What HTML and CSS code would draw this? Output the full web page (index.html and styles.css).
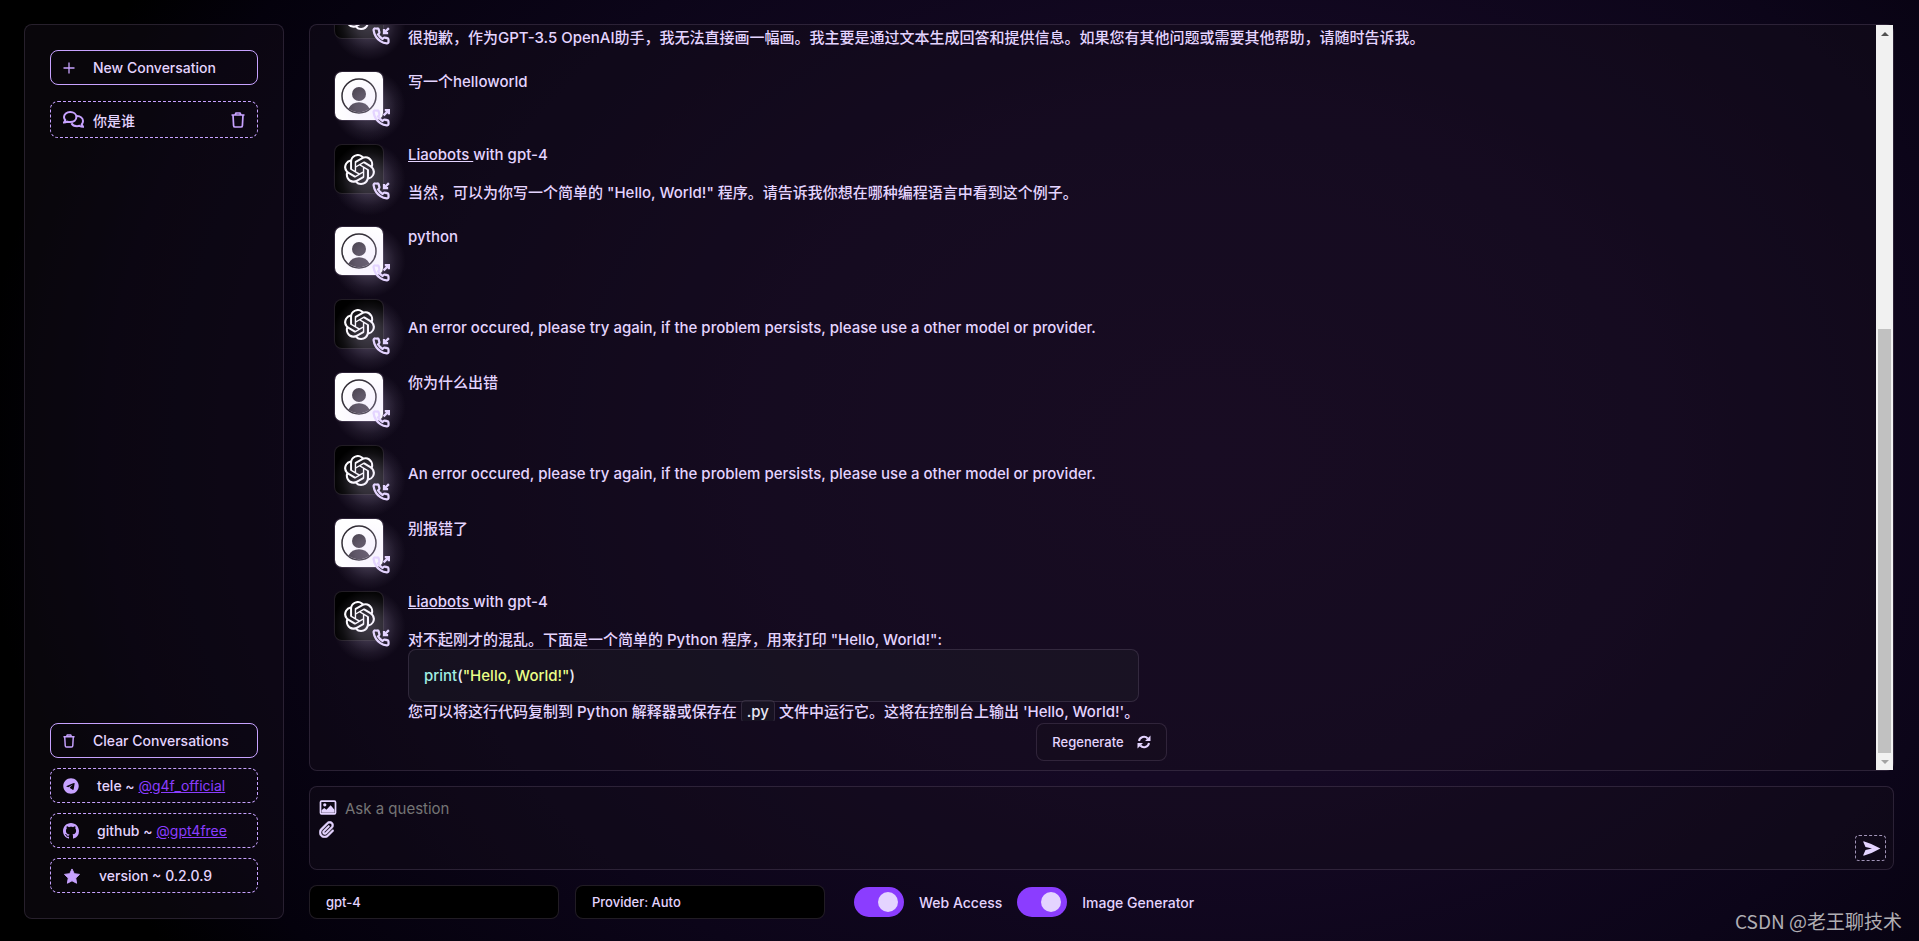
FILE: index.html
```html
<!DOCTYPE html>
<html lang="zh">

<head>
  <meta charset="UTF-8">
  <meta name="viewport" content="width=device-width, initial-scale=1.0">
  <title>g4f chat</title>
  <link rel="stylesheet" href="styles.css">
</head>

<body>
  <svg class="sprite" aria-hidden="true">
    <symbol id="i-plus" viewBox="0 0 12 12"><path d="M6 .5v11M.5 6h11" fill="none" stroke="currentColor" stroke-width="1.3" /></symbol>
    <symbol id="i-trash" viewBox="0 0 14 16"><path d="M.5 3h13M4 3l1-2h4l1 2M2 3l.6 10.6q.1 1.4 1.5 1.4h5.8q1.4 0 1.5-1.4L12 3" fill="none" stroke="currentColor" stroke-width="1.7" /></symbol>
    <symbol id="i-comments" viewBox="0 0 21 17"><path d="M7.2 1C3.700 1 1 3.200 1 6c0 1.300.5 2.300 1.300 3.200L1 11.600c1.400 0 2.500-.4 3.500-.9.8.3 1.700.4 2.700.4 3.500 0 6.200-2.200 6.200-5.100S10.700 1 7.200 1z" /><path d="M14 5c3.300.2 6 2.200 6 5 0 1.300-.5 2.400-1.300 3.300L20 15.800c-1.400 0-2.500-.4-3.500-1-.8.3-1.700.4-2.500.4-2.500 0-4.700-1.200-5.600-3" /></symbol>
    <symbol id="i-telegram" viewBox="0 0 496 512"><path fill="currentColor" d="M248 8C111.033 8 0 119.033 0 256s111.033 248 248 248 248-111.033 248-248S384.967 8 248 8zm114.952 168.66c-3.732 39.215-19.881 134.378-28.1 178.3-3.476 18.584-10.322 24.816-16.948 25.425-14.4 1.326-25.338-9.517-39.287-18.661-21.827-14.308-34.158-23.215-55.346-37.177-24.485-16.135-8.612-25 5.342-39.5 3.652-3.793 67.107-61.51 68.335-66.746.153-.655.3-3.1-1.154-4.384s-3.59-.849-5.135-.5q-3.283.746-104.608 69.142-14.845 10.194-26.894 9.934c-8.855-.191-25.888-5.006-38.551-9.123-15.531-5.048-27.875-7.717-26.8-16.291q.84-6.7 18.45-13.7 108.446-47.248 144.628-62.3c68.872-28.647 83.183-33.623 92.511-33.789 2.052-.034 6.639.474 9.61 2.885a10.452 10.452 0 013.53 6.716 43.765 43.765 0 01.417 9.769z" /></symbol>
    <symbol id="i-github" viewBox="0 0 16 16"><path fill="currentColor" d="M8 0C3.580 0 0 3.580 0 8c0 3.540 2.290 6.530 5.470 7.590.4.070.55-.170.55-.380 0-.190-.010-.820-.010-1.490-2.010.370-2.530-.490-2.690-.940-.090-.230-.480-.940-.820-1.130-.280-.150-.680-.520-.010-.530.630-.010 1.080.580 1.230.820.720 1.210 1.870.870 2.330.660.070-.520.280-.870.510-1.070-1.780-.200-3.640-.890-3.640-3.950 0-.870.310-1.590.820-2.150-.080-.200-.360-1.020.080-2.120 0 0 .670-.210 2.200.820.640-.180 1.320-.270 2-.270s1.360.090 2 .270c1.530-1.040 2.200-.820 2.200-.820.440 1.100.160 1.920.080 2.120.510.560.820 1.270.820 2.150 0 3.070-1.870 3.750-3.650 3.950.290.250.540.730.540 1.480 0 1.070-.010 1.930-.010 2.200 0 .210.150.460.550.380A8.010 8.010 0 0 0 16 8c0-4.420-3.580-8-8-8z" /></symbol>
    <symbol id="i-star" viewBox="0 0 18 17"><path fill="currentColor" stroke="currentColor" stroke-linejoin="round" d="M9 1l2.400 5 5.600.8-4 3.900.9 5.500L9 13.600l-4.900 2.600.9-5.500-4-3.900L6.600 6z" /></symbol>
    <symbol id="i-in" viewBox="0 0 24 24"><path d="M16 2.500V8h5.500M22.500 1.500L16 8M22 16.900v3a2 2 0 0 1-2.200 2 19.800 19.800 0 0 1-8.600-3.100 19.500 19.500 0 0 1-6-6A19.800 19.800 0 0 1 2.100 4.200 2 2 0 0 1 4.100 2h3a2 2 0 0 1 2 1.700c.1 1 .4 1.900.7 2.800a2 2 0 0 1-.5 2.100L8.100 9.900a16 16 0 0 0 6 6l1.300-1.300a2 2 0 0 1 2.100-.4c.9.300 1.900.6 2.800.7a2 2 0 0 1 1.700 2z" /></symbol>
    <symbol id="i-out" viewBox="0 0 24 24"><path d="M22.500 7V1.500H17M15.500 8.500l7-7M22 16.900v3a2 2 0 0 1-2.200 2 19.800 19.800 0 0 1-8.600-3.100 19.500 19.500 0 0 1-6-6A19.800 19.800 0 0 1 2.100 4.200 2 2 0 0 1 4.100 2h3a2 2 0 0 1 2 1.700c.1 1 .4 1.900.7 2.800a2 2 0 0 1-.5 2.100L8.100 9.900a16 16 0 0 0 6 6l1.300-1.300a2 2 0 0 1 2.100-.4c.9.300 1.900.6 2.800.7a2 2 0 0 1 1.700 2z" /></symbol>
    <symbol id="i-gpt" viewBox="0 0 24 24"><path fill="#fff" d="M22.2819 9.8211a5.9847 5.9847 0 0 0-.5157-4.9108 6.0462 6.0462 0 0 0-6.5098-2.9A6.0651 6.0651 0 0 0 4.9807 4.1818a5.9847 5.9847 0 0 0-3.9977 2.9 6.0462 6.0462 0 0 0 .7427 7.0966 5.98 5.98 0 0 0 .511 4.9107 6.051 6.051 0 0 0 6.5146 2.9001A5.9847 5.9847 0 0 0 13.2599 24a6.0557 6.0557 0 0 0 5.7718-4.2058 5.9894 5.9894 0 0 0 3.9977-2.9001 6.0557 6.0557 0 0 0-.7475-7.073zm-9.022 12.6081a4.4755 4.4755 0 0 1-2.8764-1.0408l.1419-.0804 4.7783-2.7582a.7948.7948 0 0 0 .3927-.6813v-6.7369l2.02 1.1686a.071.071 0 0 1 .038.052v5.5826a4.504 4.504 0 0 1-4.4945 4.4944zm-9.6607-4.1254a4.4708 4.4708 0 0 1-.5346-3.0137l.142.0852 4.783 2.7582a.7712.7712 0 0 0 .7806 0l5.8428-3.3685v2.3324a.0804.0804 0 0 1-.0332.0615L9.74 19.9502a4.4992 4.4992 0 0 1-6.1408-1.6464zM2.3408 7.8956a4.485 4.485 0 0 1 2.3655-1.9728V11.6a.7664.7664 0 0 0 .3879.6765l5.8144 3.3543-2.0201 1.1685a.0757.0757 0 0 1-.071 0l-4.8303-2.7865A4.504 4.504 0 0 1 2.3408 7.872zm16.5963 3.8558L13.1038 8.364 15.1192 7.2a.0757.0757 0 0 1 .071 0l4.8303 2.7913a4.4944 4.4944 0 0 1-.6765 8.1042v-5.6772a.79.79 0 0 0-.407-.667zm2.0107-3.0231l-.142-.0852-4.7735-2.7818a.7759.7759 0 0 0-.7854 0L9.409 9.2297V6.8974a.0662.0662 0 0 1 .0284-.0615l4.8303-2.7866a4.4992 4.4992 0 0 1 6.6802 4.66zM8.3065 12.863l-2.02-1.1638a.0804.0804 0 0 1-.038-.0567V6.0742a4.4992 4.4992 0 0 1 7.3757-3.4537l-.142.0805L8.704 5.459a.7948.7948 0 0 0-.3927.6813zm1.0976-2.3654l2.602-1.4998 2.6069 1.4998v2.9994l-2.5974 1.4997-2.6067-1.4997Z" /></symbol>
    <symbol id="i-user" viewBox="0 0 48 48"><circle cx="24" cy="24" r="17" fill="none" stroke="#28242b" stroke-width="1.500" /><circle cx="24" cy="22" r="7" fill="#3a343e" /><path fill="#3a343e" d="M13.500 36.500a12 12 0 0 1 21 0A16.500 16.500 0 0 1 13.500 36.500z" /></symbol>
    <symbol id="i-refresh" viewBox="0 0 14 14"><path d="M2 6a5 5 0 0 1 8.700-2.500M12 8a5 5 0 0 1-8.700 2.500" fill="none" stroke="currentColor" stroke-width="2" /><path fill="currentColor" d="M13.500.5V6H8zM.5 13.500V8H6z" /></symbol>
    <symbol id="i-image" viewBox="0 0 16 14"><rect x="1" y="1" width="14" height="12" rx="1" fill="none" stroke="currentColor" stroke-width="1.600" /><circle cx="5" cy="4.500" r="1.500" fill="currentColor" /><path fill="currentColor" d="M2 12V9.500l2.500-2L6.500 9 10.500 5 14 9v3z" /></symbol>
    <symbol id="i-clip" viewBox="0 0 448 512"><path fill="currentColor" stroke="currentColor" stroke-width="14" d="M364.200 83.800c-24.400-24.400-64-24.400-88.400 0l-184 184c-42.100 42.100-42.100 110.300 0 152.400s110.300 42.100 152.400 0l152-152c10.900-10.900 28.700-10.900 39.600 0s10.900 28.700 0 39.600l-152 152c-64 64-167.600 64-231.600 0s-64-167.600 0-231.600l184-184c46.300-46.300 121.300-46.300 167.600 0s46.300 121.300 0 167.600l-176 176c-28.600 28.600-75 28.600-103.600 0s-28.600-75 0-103.600l144-144c10.900-10.900 28.700-10.900 39.600 0s10.900 28.700 0 39.600l-144 144c-6.700 6.700-6.700 17.700 0 24.400s17.700 6.700 24.400 0l176-176c24.400-24.400 24.400-64 0-88.400z" /></symbol>
    <symbol id="i-send" viewBox="0 0 18 15"><path fill="currentColor" d="M.6.2Q9 2.600 17.400 7.500 9 12.400.6 14.800q-.5-.2-.2-1L2.500 9 9 7.500 2.500 6 .4 1.200q-.3-.8.2-1z" /></symbol>
  </svg>

  <div class="row">
    <aside class="box conversations">
      <div class="top">
        <button class="item solid">
          <svg class="icon small"><use href="#i-plus" /></svg>
          <span class="label">New Conversation</span>
        </button>
        <div class="item convo">
          <svg class="icon comments"><use href="#i-comments" /></svg>
          <span class="label">你是谁</span>
          <button class="delete" aria-label="Delete"><svg class="icon"><use href="#i-trash" /></svg></button>
        </div>
      </div>
      <div class="bottom">
        <button class="item solid">
          <svg class="icon small"><use href="#i-trash" /></svg>
          <span class="label">Clear Conversations</span>
        </button>
        <div class="item info">
          <svg class="icon"><use href="#i-telegram" /></svg>
          <span>tele ~ <a href="#">@g4f_official</a></span>
        </div>
        <div class="item info">
          <svg class="icon"><use href="#i-github" /></svg>
          <span>github ~ <a href="#">@gpt4free</a></span>
        </div>
        <div class="item info version">
          <svg class="icon star"><use href="#i-star" /></svg>
          <span>version ~ 0.2.0.9</span>
        </div>
      </div>
    </aside>

    <main class="conversation">
      <section class="box chat">
        <div class="chat-body">
          <div class="messages">
            <div class="message">
              <div class="avatar gpt"><svg class="face"><use href="#i-gpt" /></svg><svg class="phone"><use href="#i-in" /></svg></div>
              <div class="content">
                <div class="provider"></div>
                <p>很抱歉，作为GPT-3.5 OpenAI助手，我无法直接画一幅画。我主要是通过文本生成回答和提供信息。如果您有其他问题或需要其他帮助，请随时告诉我。</p>
              </div>
            </div>
            <div class="message">
              <div class="avatar user"><svg class="face"><use href="#i-user" /></svg><svg class="phone"><use href="#i-out" /></svg></div>
              <div class="content">写一个helloworld</div>
            </div>
            <div class="message">
              <div class="avatar gpt"><svg class="face"><use href="#i-gpt" /></svg><svg class="phone"><use href="#i-in" /></svg></div>
              <div class="content">
                <div class="provider"><a href="#">Liaobots </a>with gpt-4</div>
                <p>当然，可以为你写一个简单的 "Hello, World!" 程序。请告诉我你想在哪种编程语言中看到这个例子。</p>
              </div>
            </div>
            <div class="message">
              <div class="avatar user"><svg class="face"><use href="#i-user" /></svg><svg class="phone"><use href="#i-out" /></svg></div>
              <div class="content">python</div>
            </div>
            <div class="message">
              <div class="avatar gpt"><svg class="face"><use href="#i-gpt" /></svg><svg class="phone"><use href="#i-in" /></svg></div>
              <div class="content">
                <p>An error occured, please try again, if the problem persists, please use a other model or provider.</p>
              </div>
            </div>
            <div class="message">
              <div class="avatar user"><svg class="face"><use href="#i-user" /></svg><svg class="phone"><use href="#i-out" /></svg></div>
              <div class="content">你为什么出错</div>
            </div>
            <div class="message">
              <div class="avatar gpt"><svg class="face"><use href="#i-gpt" /></svg><svg class="phone"><use href="#i-in" /></svg></div>
              <div class="content">
                <p>An error occured, please try again, if the problem persists, please use a other model or provider.</p>
              </div>
            </div>
            <div class="message">
              <div class="avatar user"><svg class="face"><use href="#i-user" /></svg><svg class="phone"><use href="#i-out" /></svg></div>
              <div class="content">别报错了</div>
            </div>
            <div class="message">
              <div class="avatar gpt"><svg class="face"><use href="#i-gpt" /></svg><svg class="phone"><use href="#i-in" /></svg></div>
              <div class="content">
                <div class="provider"><a href="#">Liaobots </a>with gpt-4</div>
                <p>对不起刚才的混乱。下面是一个简单的 Python 程序，用来打印 "Hello, World!":</p>
                <pre><code><span class="builtin">print</span>(<span class="string">"Hello, World!"</span>)</code></pre>
                <p class="after">您可以将这行代码复制到 Python 解释器或保存在 <code class="inline">.py</code> 文件中运行它。这将在控制台上输出 'Hello, World!'。</p>
              </div>
            </div>
          </div>
          <div class="toolbar">
            <button class="regenerate">Regenerate <svg><use href="#i-refresh" /></svg></button>
          </div>
        </div>
        <div class="scrollbar" aria-hidden="true">
          <span class="arrow up"></span>
          <span class="thumb"></span>
          <span class="arrow down"></span>
        </div>
      </section>

      <section class="box input-box">
        <div class="attach">
          <button aria-label="Image"><svg class="image"><use href="#i-image" /></svg></button>
          <button aria-label="File"><svg class="clip"><use href="#i-clip" /></svg></button>
        </div>
        <textarea placeholder="Ask a question" aria-label="Ask a question"></textarea>
        <button class="send" aria-label="Send"><svg><use href="#i-send" /></svg></button>
      </section>

      <div class="options">
        <select aria-label="Model">
          <option>gpt-4</option>
        </select>
        <select aria-label="Provider">
          <option>Provider: Auto</option>
        </select>
        <div class="switches">
          <input type="checkbox" id="switch" checked>
          <label for="switch">Web Access</label>
          <input type="checkbox" id="patch" checked>
          <label for="patch">Image Generator</label>
        </div>
      </div>
    </main>
  </div>

  <div class="watermark">CSDN @老王聊技术</div>
</body>

</html>
```

FILE: styles.css
```css
:root {
  --colour-3: #e4d4ff;
  --accent: #8b3dff;
  --conversations: #c7a2ff;
  --blur-bg: #16101b66;
  --blur-border: #84719040;
}

* {
  box-sizing: border-box;
  margin: 0;
  padding: 0;
}

body {
  font-family: Inter, "Noto Sans CJK SC", sans-serif;
  font-size: 15px;
  font-weight: 500;
  color: var(--colour-3);
  background: radial-gradient(ellipse 64% 100% at 63% 48%, #1a0a28 0%, #150924 35%, #0c0519 65%, #04010c 90%, #000 100%) #000;
  height: 100vh;
  overflow: hidden;
}

button,
select,
textarea {
  font: inherit;
  color: inherit;
  background: none;
  border: none;
}

button {
  cursor: pointer;
}

.sprite {
  display: none;
}

.row {
  display: flex;
  gap: 25px;
  height: 100vh;
  padding: 24px 25px 22px 24px;
}

.box {
  background: var(--blur-bg);
  border: 1px solid var(--blur-border);
  border-radius: 8px;
}

/* sidebar */
.conversations {
  flex: 0 0 260px;
  display: flex;
  flex-direction: column;
  justify-content: space-between;
  padding: 25px;
  font-size: 14px;
}

.top,
.bottom {
  display: flex;
  flex-direction: column;
  gap: 16px;
}

.bottom {
  gap: 10px;
}

.item {
  display: flex;
  align-items: center;
  width: 100%;
  height: 35px;
  padding: 0 11px 0 12px;
  border: 1px dashed var(--conversations);
  border-radius: 8px;
  text-align: left;
}

.item.solid {
  border-style: solid;
}

.item.convo {
  height: 37px;
}

.icon {
  flex: none;
  width: 16px;
  height: 16px;
  color: var(--conversations);
}

.icon.small {
  width: 12px;
  height: 14px;
}

.solid .label {
  margin-left: 18px;
}

.icon.comments {
  width: 21px;
  height: 17px;
  fill: none;
  stroke: currentColor;
  stroke-width: 2;
}

.convo .label {
  flex: 1;
  margin-left: 9px;
}

.delete {
  display: flex;
}

.info .icon {
  margin-right: 18px;
}

.info .star {
  width: 18px;
}

.info a {
  color: var(--accent);
  font-weight: 400;
}

/* chat */
.conversation {
  flex: 1;
  min-width: 0;
  display: flex;
  flex-direction: column;
}

.chat {
  flex: 1;
  min-height: 0;
  display: flex;
}

.chat-body {
  flex: 1;
  min-width: 0;
  display: flex;
  flex-direction: column;
}

.messages {
  flex: 1;
  min-height: 0;
  display: flex;
  flex-direction: column;
  justify-content: flex-end;
  gap: 23px;
  padding-left: 24px;
  overflow: hidden;
}

.message {
  flex: none;
  display: flex;
  align-items: flex-start;
  gap: 24px;
}

.avatar {
  position: relative;
  flex: none;
  display: flex;
  align-items: center;
  justify-content: center;
  width: 50px;
  height: 50px;
  border: 1px solid var(--blur-border);
  border-radius: 8px;
  background: #000;
}

.avatar.user {
  background: #fff;
  background-clip: padding-box;
}

.avatar::after {
  content: "";
  position: absolute;
  right: -24px;
  bottom: -24px;
  width: 76px;
  height: 76px;
  background: radial-gradient(circle, #e4d4ff48 0%, #e4d4ff38 25%, #e4d4ff12 50%, #e4d4ff00 68%);
}

.gpt .face {
  width: 31px;
  height: 31px;
}

.user .face {
  width: 48px;
  height: 48px;
}

.phone {
  position: absolute;
  right: -7px;
  bottom: -7px;
  z-index: 1;
  width: 18px;
  height: 18px;
  fill: none;
  stroke: var(--colour-3);
  stroke-width: 3;
}

.content {
  padding-top: 1px;
  line-height: 19px;
}

.content p {
  margin-top: 18px;
  padding-bottom: 1px;
}

.content .provider {
  min-height: 20px;
  line-height: 20px;
}

.content a {
  color: inherit;
  white-space: pre;
}

.content pre {
  margin-top: -1px;
  padding: 16px 15px;
  font-family: inherit;
  border: 1px solid var(--blur-border);
  border-radius: 8px;
  background: #1c1a2680;
}

.content code {
  font-family: inherit;
  font-size: 15px;
  color: #e9e9f4;
}

.content .builtin {
  color: #a1efe4;
}

.content .string {
  color: #ebff87;
}

.content .after {
  margin-top: 0;
  padding-bottom: 0;
}

.content .inline {
  padding: 1px 5px;
  border: 1px solid var(--blur-border);
  border-radius: 4px;
  background: #1c1a2680;
}

.toolbar {
  flex: 0 0 49px;
  display: flex;
  justify-content: center;
  align-items: flex-start;
  padding-top: 2px;
  margin-right: -17px;
}

.regenerate {
  display: flex;
  align-items: center;
  gap: 13px;
  height: 38px;
  padding: 0 15px;
  font-size: 13px;
  background: var(--blur-bg);
  border: 1px solid var(--blur-border);
  border-radius: 8px;
}

.regenerate svg {
  width: 14px;
  height: 14px;
}

.scrollbar {
  flex: 0 0 17px;
  display: flex;
  flex-direction: column;
  align-items: center;
  background: #f1f1f1;
}

.arrow {
  display: flex;
  align-items: center;
  justify-content: center;
  height: 17px;
}

.arrow::before {
  content: "";
  border: 4px solid transparent;
  border-top-width: 0;
  border-bottom-color: #505050;
}

.arrow.down::before {
  border-width: 4px 4px 0;
  border-top-color: #a3a3a3;
}

.thumb {
  width: 13px;
  height: 424px;
  margin-top: auto;
  background: #c1c1c1;
}

/* input */
.input-box {
  display: flex;
  height: 84px;
  margin: 15px 0;
  padding: 8px 7px 8px 8px;
}

.attach {
  display: flex;
  flex-direction: column;
  gap: 6px;
  padding: 5px 1px;
}

.attach button {
  display: flex;
}

.attach .image {
  width: 18px;
  height: 15px;
}

.attach .clip {
  width: 15px;
  height: 17px;
}

.input-box textarea {
  flex: 1;
  padding: 4px 7px;
  font-weight: 400;
  line-height: 20px;
  resize: none;
  outline: none;
}

.input-box textarea::placeholder {
  color: #757575;
}

.send {
  align-self: flex-end;
  display: flex;
  align-items: center;
  justify-content: flex-end;
  width: 31px;
  height: 26px;
  padding-right: 4px;
  border: 1px dashed #e4d4ffb0;
  border-radius: 4px;
}

.send svg {
  width: 18px;
  height: 15px;
}

.options {
  display: flex;
  align-items: center;
  gap: 16px;
  font-size: 14px;
}

.options select {
  appearance: none;
  width: 250px;
  height: 34px;
  padding: 0 16px;
  font-size: 13px;
  background: #000;
  border: 1px solid var(--blur-border);
  border-radius: 8px;
}

.switches {
  display: flex;
  align-items: center;
  gap: 15px;
  margin-left: 13px;
}

.switches input {
  appearance: none;
  display: flex;
  align-items: center;
  justify-content: flex-end;
  width: 50px;
  height: 30px;
  padding: 0 6px;
  border-radius: 15px;
  background: var(--accent);
}

.switches input::before {
  content: "";
  width: 20px;
  height: 20px;
  border-radius: 50%;
  background: var(--colour-3);
}

.watermark {
  position: absolute;
  right: 17px;
  bottom: 5px;
  font: 400 19px/30px "Noto Sans CJK SC", sans-serif;
  color: #b0aeb3;
}
```
